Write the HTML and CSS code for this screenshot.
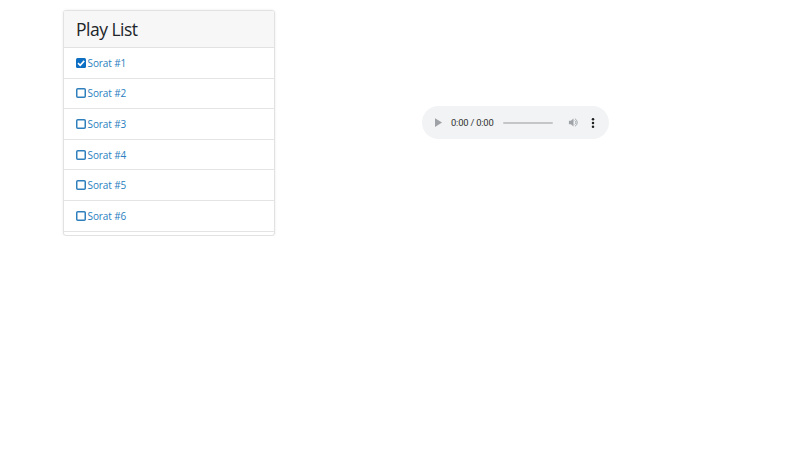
FILE: index.html
```html
<!DOCTYPE html>
<html lang="en">
  <head>
    <meta charset="UTF-8" />
    <title>Play List</title>
    <link rel="stylesheet" href="styles.css">
  </head>
  <body>
    <div class="container">
      <div class="card">
        <div class="card-header">Play List</div>
        <ul class="list">
          <li><a href="#"><svg class="box" viewBox="0 0 10 10" width="10" height="10"><rect width="10" height="10" rx="1.5" fill="#0d6fc4"/><path d="M2 5.2 4.2 7.3 8.2 2.9" fill="none" stroke="#fff" stroke-width="1.6"/></svg>Sorat #1</a></li>
          <li><a href="#"><svg class="box" viewBox="0 0 10 10" width="10" height="10"><rect x=".75" y=".75" width="8.5" height="8.5" rx="1" fill="none" stroke="#2f7fbd" stroke-width="1.5"/></svg>Sorat #2</a></li>
          <li><a href="#"><svg class="box" viewBox="0 0 10 10" width="10" height="10"><rect x=".75" y=".75" width="8.5" height="8.5" rx="1" fill="none" stroke="#2f7fbd" stroke-width="1.5"/></svg>Sorat #3</a></li>
          <li><a href="#"><svg class="box" viewBox="0 0 10 10" width="10" height="10"><rect x=".75" y=".75" width="8.5" height="8.5" rx="1" fill="none" stroke="#2f7fbd" stroke-width="1.5"/></svg>Sorat #4</a></li>
          <li><a href="#"><svg class="box" viewBox="0 0 10 10" width="10" height="10"><rect x=".75" y=".75" width="8.5" height="8.5" rx="1" fill="none" stroke="#2f7fbd" stroke-width="1.5"/></svg>Sorat #5</a></li>
          <li><a href="#"><svg class="box" viewBox="0 0 10 10" width="10" height="10"><rect x=".75" y=".75" width="8.5" height="8.5" rx="1" fill="none" stroke="#2f7fbd" stroke-width="1.5"/></svg>Sorat #6</a></li>
        </ul>
      </div>
      <div class="player">
        <svg class="play" viewBox="0 0 8 10" width="7" height="9"><path d="M0 0 8 5 0 10z" fill="#9fa2a6"/></svg>
        <span class="time">0:00 / 0:00</span>
        <span class="track"></span>
        <svg class="volume" viewBox="0 0 12 12" width="11" height="11"><path d="M1 4.2h2.2L6 1.6v8.8L3.2 7.8H1z" fill="#9fa2a6"/><path d="M7.3 3.8a2.6 2.6 0 0 1 0 4.4M7.6 1.9a4.6 4.6 0 0 1 0 8.2" fill="none" stroke="#9fa2a6" stroke-width="1"/></svg>
        <svg class="menu" viewBox="0 0 4 12" width="4" height="12"><circle cx="2" cy="2.2" r="1.25" fill="#1f1f1f"/><circle cx="2" cy="6" r="1.25" fill="#1f1f1f"/><circle cx="2" cy="9.8" r="1.25" fill="#1f1f1f"/></svg>
      </div>
    </div>
  </body>
</html>
```

FILE: styles.css
```css
* {
  box-sizing: border-box;
}

body {
  margin: 0;
  font-family: "Open Sans", "Noto Sans", sans-serif;
  background: #fff;
}

.container {
  display: flex;
  align-items: flex-start;
  padding: 10px 0 0 63px;
}

.card {
  width: 212px;
  height: 226px;
  overflow: hidden;
  background: #fff;
  border: 1px solid #e2e2e2;
  border-radius: 3px;
  box-shadow: 0 0 3px rgba(0, 0, 0, 0.08);
}

.card-header {
  height: 37px;
  padding: 0 12px;
  font-size: 17.5px;
  letter-spacing: -0.5px;
  line-height: 37px;
  color: #212529;
  background: #f7f7f7;
  border-bottom: 1px solid #e2e2e2;
}

.list {
  margin: 0;
  padding: 0;
  list-style: none;
}

.list li {
  height: 30.6px;
  padding: 0 12px;
  border-bottom: 1px solid #e4e4e4;
}

.list a {
  display: flex;
  align-items: center;
  height: 100%;
  font-size: 10px;
  letter-spacing: -0.1px;
  color: #2a80c0;
  text-decoration: none;
}

.box {
  flex: none;
  margin-right: 1.5px;
}

.player {
  display: flex;
  align-items: center;
  width: 187px;
  height: 33px;
  margin: 96px 0 0 147px;
  padding: 0 14px 0 13px;
  border-radius: 17px;
  background: #f1f3f4;
}

.play {
  flex: none;
}

.time {
  width: 42px;
  margin-left: 9px;
  font-family: Roboto, sans-serif;
  font-size: 9.4px;
  letter-spacing: -0.2px;
  color: #303030;
  white-space: nowrap;
}

.track {
  width: 50px;
  height: 2px;
  margin-left: 10px;
  border-radius: 1px;
  background: #c4c6c8;
}

.volume {
  flex: none;
  margin-left: 15px;
}

.menu {
  flex: none;
  margin-left: 12px;
}
```
